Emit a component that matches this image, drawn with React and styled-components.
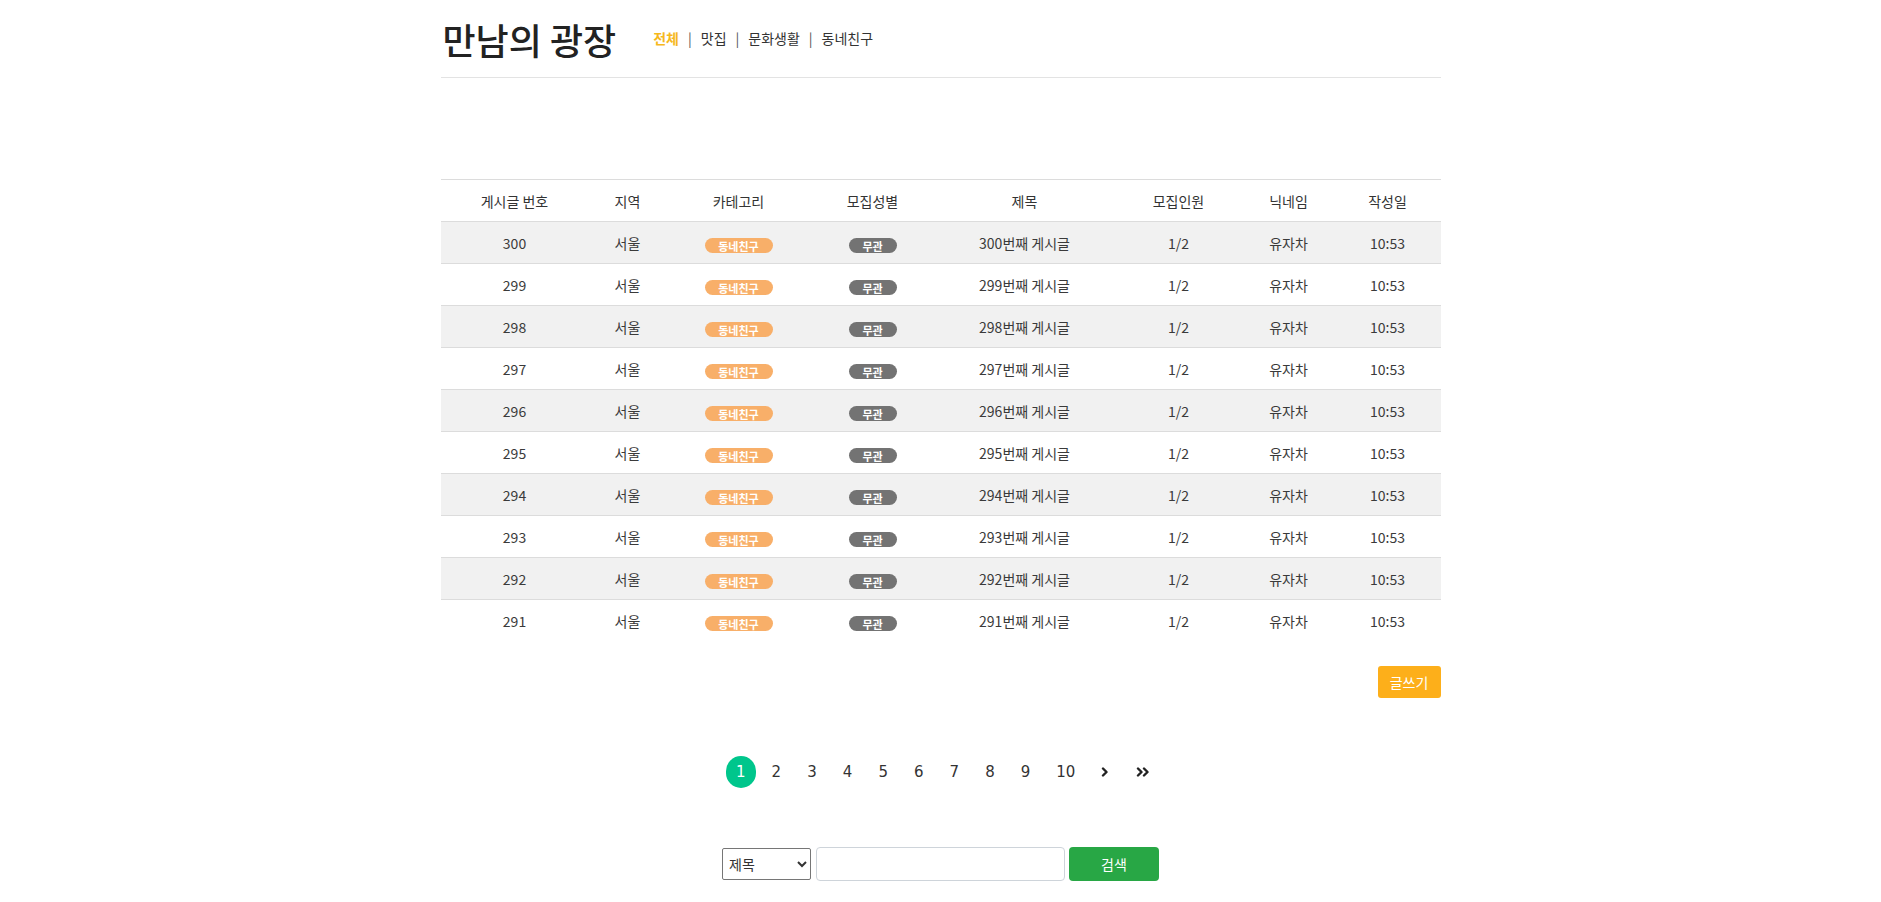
import React from "react";
import styled, { createGlobalStyle } from "styled-components";

const GlobalStyle = createGlobalStyle`
  html, body { margin: 0; padding: 0; background: #fff; }
  body { font-family: "Noto Sans CJK KR", "Noto Sans", sans-serif; color: #333; }
  * { box-sizing: border-box; }
`;

const Page = styled.div`
  width: 1000px;
  margin: 0 auto;
`;

const Header = styled.header`
  display: flex;
  align-items: center;
  height: 78px;
  border-bottom: 1px solid #e3e3e3;
`;

const Title = styled.h1`
  margin: 0 0 0 2px;
  font-size: 36px;
  font-weight: 500;
  color: #222;
`;

const Nav = styled.nav`
  display: flex;
  align-items: center;
  margin-left: 37px;
  font-size: 14px;
  margin-top: -2px;
`;

const NavItem = styled.a`
  color: ${(p) => (p.$active ? "#f6b81c" : "#333")};
  font-weight: ${(p) => (p.$active ? 700 : 400)};
  text-decoration: none;
`;

const Sep = styled.span`
  margin: 0 9px;
  color: #555;
`;

const Table = styled.table`
  width: 1000px;
  margin-top: 101px;
  border-collapse: collapse;
  table-layout: fixed;
  border-top: 1px solid #dcdcdc;
  font-size: 14px;
`;

const Th = styled.th`
  height: 42px;
  font-weight: 400;
  color: #333;
  text-align: center;
  padding: 0;
`;

const Tr = styled.tr`
  border-top: 1px solid #dcdcdc;
  background: ${(p) => (p.$striped ? "#f1f1f1" : "#fff")};
`;

const Td = styled.td`
  height: 42px;
  text-align: center;
  color: #3a3a3a;
  padding: 0;
`;

const Badge = styled.span`
  display: inline-flex;
  align-items: center;
  justify-content: center;
  width: ${(p) => p.$w}px;
  height: 15px;
  border-radius: 8px;
  background: ${(p) => p.$bg};
  color: #fff;
  font-size: 11px;
  font-weight: 700;
  vertical-align: middle;
  position: relative;
  top: 1px;
`;

const Actions = styled.div`
  display: flex;
  justify-content: flex-end;
  margin-top: 24px;
`;

const WriteButton = styled.button`
  width: 63px;
  height: 32px;
  border: none;
  border-radius: 3px;
  background: #fdaf1a;
  color: #fff;
  font-family: "Noto Sans CJK KR", sans-serif;
  font-size: 14px;
  padding: 0;
`;

const Pagination = styled.div`
  display: flex;
  justify-content: center;
  align-items: center;
  margin-top: 58px;
`;

const PageNum = styled.a`
  display: flex;
  align-items: center;
  justify-content: center;
  min-width: 30px;
  height: 32px;
  padding: 0 ${(p) => (p.$active ? 0 : 10)}px;
  margin: 0 2.8px;
  border-radius: 16px;
  font-family: "DejaVu Sans", sans-serif;
  font-size: 15px;
  color: ${(p) => (p.$active ? "#fff" : "#333")};
  background: ${(p) => (p.$active ? "#00c68c" : "transparent")};
`;

const Arrow = styled.a`
  display: flex;
  align-items: center;
  justify-content: center;
  width: 30px;
  height: 32px;
  margin-left: ${(p) => p.$gap}px;
  color: #222;
`;

const SearchBar = styled.form`
  display: flex;
  justify-content: center;
  align-items: center;
  margin-top: 59px;
  padding-bottom: 20px;
`;

const Select = styled.select`
  width: 89px;
  height: 32px;
  border: 1px solid #767676;
  border-radius: 2px;
  font-family: "Noto Sans CJK KR", sans-serif;
  font-size: 14px;
  color: #333;
  background: #fff;
  padding: 0 2px;
`;

const Input = styled.input`
  width: 249px;
  height: 34px;
  margin-left: 5px;
  border: 1px solid #ced4da;
  border-radius: 4px;
`;

const SearchButton = styled.button`
  width: 90px;
  height: 34px;
  margin-left: 4px;
  border: none;
  border-radius: 4px;
  background: #28a745;
  color: #fff;
  font-family: "Noto Sans CJK KR", sans-serif;
  font-size: 14px;
`;

const cols = [148, 78, 144, 124, 180, 128, 92, 106];
const heads = ["게시글 번호", "지역", "카테고리", "모집성별", "제목", "모집인원", "닉네임", "작성일"];

const Chevron = ({ double }) => (
  <svg width={double ? 14 : 8} height="10" viewBox={double ? "0 0 14 10" : "0 0 8 10"}>
    <path d="M2 1.5 L5.5 5 L2 8.5" fill="none" stroke="currentColor" strokeWidth="2.4" strokeLinecap="round" strokeLinejoin="round" />
    {double && (
      <path d="M8 1.5 L11.5 5 L8 8.5" fill="none" stroke="currentColor" strokeWidth="2.4" strokeLinecap="round" strokeLinejoin="round" />
    )}
  </svg>
);

export default function App() {
  const rows = Array.from({ length: 10 }, (_, i) => 300 - i);
  return (
    <>
      <GlobalStyle />
      <Page>
        <Header>
          <Title>만남의 광장</Title>
          <Nav>
            <NavItem $active>전체</NavItem>
            <Sep>|</Sep>
            <NavItem>맛집</NavItem>
            <Sep>|</Sep>
            <NavItem>문화생활</NavItem>
            <Sep>|</Sep>
            <NavItem>동네친구</NavItem>
          </Nav>
        </Header>
        <Table>
          <colgroup>
            {cols.map((w, i) => (
              <col key={i} style={{ width: w }} />
            ))}
          </colgroup>
          <thead>
            <tr>
              {heads.map((h) => (
                <Th key={h}>{h}</Th>
              ))}
            </tr>
          </thead>
          <tbody>
            {rows.map((n, i) => (
              <Tr key={n} $striped={i % 2 === 0}>
                <Td>{n}</Td>
                <Td>서울</Td>
                <Td>
                  <Badge $w={68} $bg="#f8af69">동네친구</Badge>
                </Td>
                <Td>
                  <Badge $w={48} $bg="#737373">무관</Badge>
                </Td>
                <Td>{n}번째 게시글</Td>
                <Td>1/2</Td>
                <Td>유자차</Td>
                <Td>10:53</Td>
              </Tr>
            ))}
          </tbody>
        </Table>
        <Actions>
          <WriteButton>글쓰기</WriteButton>
        </Actions>
        <Pagination>
          {Array.from({ length: 10 }, (_, i) => (
            <PageNum key={i} $active={i === 0}>
              {i + 1}
            </PageNum>
          ))}
          <Arrow $gap={2}>
            <Chevron />
          </Arrow>
          <Arrow $gap={8}>
            <Chevron double />
          </Arrow>
        </Pagination>
        <SearchBar onSubmit={(e) => e.preventDefault()}>
          <Select defaultValue="title">
            <option value="title">제목</option>
            <option value="content">내용</option>
          </Select>
          <Input type="text" />
          <SearchButton type="submit">검색</SearchButton>
        </SearchBar>
      </Page>
    </>
  );
}
